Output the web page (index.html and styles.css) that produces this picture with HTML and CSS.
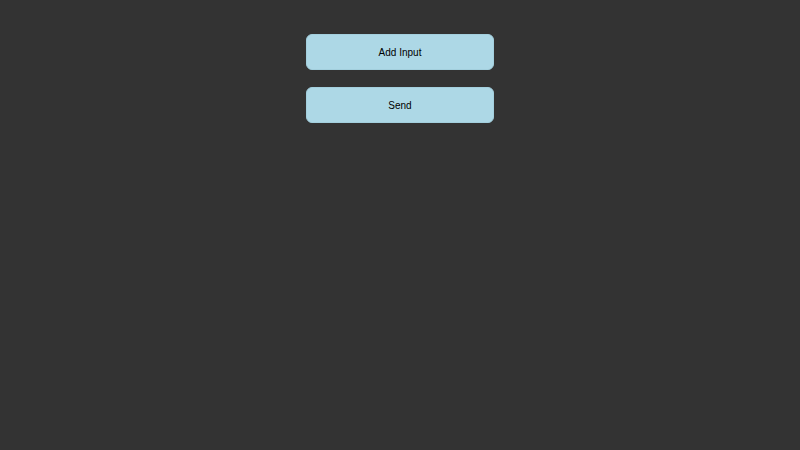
FILE: index.html
```html
<!DOCTYPE html>
<html>
<head>
<meta charset="utf-8">
<link rel="stylesheet" href="styles.css">
</head>
<body>
<div class="stack">
  <button class="btn">Add Input</button>
  <button class="btn">Send</button>
</div>
</body>
</html>
```
FILE: styles.css
```css
html, body {
  margin: 0;
  padding: 0;
  background: #333333;
  height: 100%;
}
.stack {
  display: flex;
  flex-direction: column;
  align-items: center;
  gap: 17px;
  padding-top: 34px;
}
.btn {
  width: 188px;
  height: 36px;
  background: #add8e6;
  border: 1px solid #a3cfdd;
  border-radius: 6px;
  font-family: "Liberation Sans", Arial, sans-serif;
  font-size: 10px;
  color: #000;
  padding: 0;
}
```
